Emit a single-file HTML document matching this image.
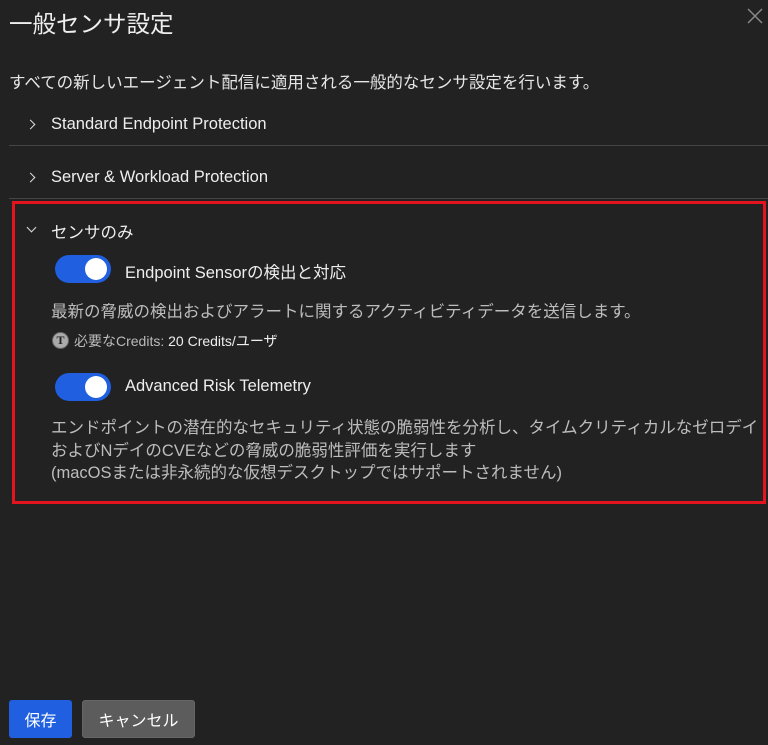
<!DOCTYPE html>
<html><head><meta charset="utf-8"><style>
*{margin:0;padding:0;box-sizing:border-box}
body{width:768px;height:745px;background:#222222;color:#e6e6e6;font-family:"Liberation Sans","Noto Sans CJK JP",sans-serif;position:relative;overflow:hidden}
.a{position:absolute;white-space:nowrap}
.t{left:9px;top:5px;font-size:23.5px;color:#eee}
.s{left:9px;top:69px;font-size:16.5px}
.ch{width:7px;height:7px;border-right:1.6px solid #ddd;border-top:1.6px solid #ddd;transform:rotate(45deg)}
.cd{width:7px;height:7px;border-right:1.6px solid #ddd;border-bottom:1.6px solid #ddd;transform:rotate(45deg)}
.h{font-size:16.5px;color:#eee}
.hr{position:absolute;left:9px;right:0;height:1px;background:#444}
.box{position:absolute;left:12px;top:201px;width:754px;height:303px;border:3px solid #e4141e}
.tg{position:absolute;width:56px;height:28px;border-radius:14px;background:#1f5fe0}
.tg:after{content:"";position:absolute;right:4px;top:3px;width:22px;height:22px;border-radius:50%;background:#fff}
.d{font-size:16.5px;color:#bdbdbd}
.btn{position:absolute;top:700px;height:38px;border-radius:3px;font-size:16px;display:flex;align-items:center;justify-content:center;color:#fff}
</style></head><body>
<div class="a t">一般センサ設定</div>
<svg class="a" style="left:747px;top:8px" width="16" height="16"><path d="M1 1L15 15M15 1L1 15" stroke="#888" stroke-width="1.5"/></svg>
<div class="a s">すべての新しいエージェント配信に適用される一般的なセンサ設定を行います。</div>
<div class="a ch" style="left:27px;top:121px"></div>
<div class="a h" style="left:51px;top:115px">Standard Endpoint Protection</div>
<div class="hr" style="top:145px"></div>
<div class="a ch" style="left:27px;top:174px"></div>
<div class="a h" style="left:51px;top:168px">Server &amp; Workload Protection</div>
<div class="hr" style="top:198px"></div>
<div class="box"></div>
<div class="a cd" style="left:28px;top:224px"></div>
<div class="a h" style="left:51px;top:219px">センサのみ</div>
<div class="tg" style="left:55px;top:255px"></div>
<div class="a h" style="left:125px;top:259px">Endpoint Sensorの検出と対応</div>
<div class="a d" style="left:51px;top:298px">最新の脅威の検出およびアラートに関するアクティビティデータを送信します。</div>
<div class="a" style="left:52px;top:332px;width:17px;height:17px;border-radius:50%;background:#aaa;border:1.5px solid #666;color:#222;font-size:12px;font-weight:bold;text-align:center;line-height:14px;font-family:'Liberation Serif',serif">T</div>
<div class="a" style="left:74px;top:331px;font-size:14px;color:#bbb">必要なCredits: <span style="color:#eee">20 Credits/ユーザ</span></div>
<div class="tg" style="left:55px;top:373px"></div>
<div class="a h" style="left:125px;top:377px">Advanced Risk Telemetry</div>
<div class="a d" style="left:51px;top:417px;line-height:22.5px">エンドポイントの潜在的なセキュリティ状態の脆弱性を分析し、タイムクリティカルなゼロデイ<br>およびNデイのCVEなどの脅威の脆弱性評価を実行します<br>(macOSまたは非永続的な仮想デスクトップではサポートされません)</div>
<div class="btn" style="left:9px;width:63px;background:#1f5fe0">保存</div>
<div class="btn" style="left:82px;width:113px;background:#5c5c5c;border:1px solid #666">キャンセル</div>
</body></html>
